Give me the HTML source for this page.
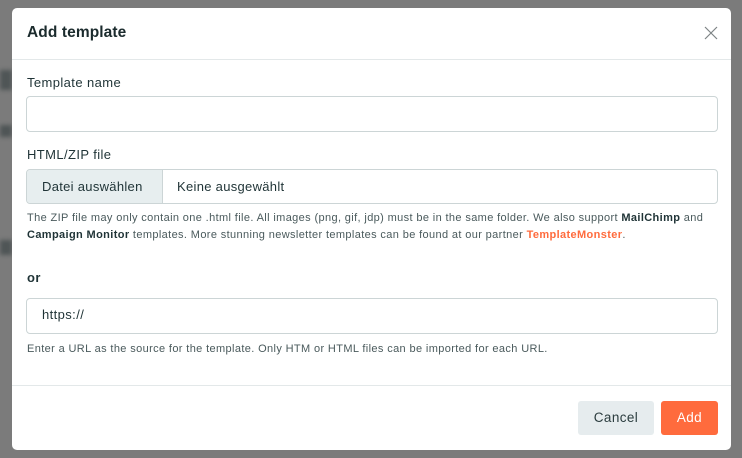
<!DOCTYPE html>
<html><head><meta charset="utf-8"><style>
*{box-sizing:border-box;margin:0;padding:0}
body{width:742px;height:458px;background:#7b7b7b;font-family:"Liberation Sans",sans-serif;position:relative;overflow:hidden;color:#1f3336}
.bl{position:absolute;left:0;width:12px;background:#4f5556;filter:blur(2px)}
.m{position:absolute;left:12px;top:8px;width:719px;height:442px;background:#fff;border-radius:5px}
.hd{height:52px;border-bottom:1px solid #e3e8e9;position:relative}
.hd h1{position:absolute;left:15px;top:16px;font-size:15.5px;font-weight:bold;color:#1b2b2d;letter-spacing:.1px}
.x{position:absolute;right:12px;top:17px}
.lbl{position:absolute;left:15px;font-size:13px;color:#1f3336;letter-spacing:.4px}
.in{position:absolute;left:14px;width:692px;height:36px;border:1px solid #ccd5d6;border-radius:4px}
.file{position:absolute;left:14px;top:161px;width:692px;height:35px;border:1px solid #ccd5d6;border-radius:4px;overflow:hidden;font-size:13px;letter-spacing:.3px}
.fb{position:absolute;left:0;top:0;bottom:0;width:136px;background:#e7eeef;border-right:1px solid #ccd5d6;padding:9px 0 0 15px;color:#1f3336}
.ft{position:absolute;left:150px;top:9px}
.hlp{position:absolute;left:15px;font-size:11px;letter-spacing:.37px;color:#4a5a5c;line-height:17px;width:710px;white-space:nowrap}
.hlp b{color:#1f3336}
.or{color:#ff6b3d;font-weight:bold}
.fd{position:absolute;left:0;right:0;top:377px;border-top:1px solid #e3e8e9}
.btn{position:absolute;top:393px;height:34px;border-radius:3px;font-size:13.5px;text-align:center;line-height:34px;letter-spacing:.4px}
</style></head><body>
<div class="bl" style="top:70px;height:20px"></div>
<div class="bl" style="top:125px;height:12px"></div>
<div class="bl" style="top:240px;height:15px"></div>
<div class="m">
<div class="hd"><h1>Add template</h1>
<svg class="x" width="16" height="16" viewBox="0 0 16 16"><path d="M2 2L14 14M14 2L2 14" stroke="#7d8485" stroke-width="1.2"/></svg></div>
<div class="lbl" style="top:67px">Template name</div>
<div class="in" style="top:88px"></div>
<div class="lbl" style="top:139px">HTML/ZIP file</div>
<div class="file"><div class="fb">Datei auswählen</div><div class="ft">Keine ausgewählt</div></div>
<div class="hlp" style="top:202px">The ZIP file may only contain one .html file. All images (png, gif, jdp) must be in the same folder. We also support <b>MailChimp</b> and<br><b>Campaign Monitor</b> templates. More stunning newsletter templates can be found at our partner <span class="or">TemplateMonster</span>.</div>
<div class="lbl" style="top:262px;font-weight:bold">or</div>
<div class="in" style="top:290px;font-size:13px;padding:8px 0 0 15px;letter-spacing:.4px">https://</div>
<div class="hlp" style="top:333px">Enter a URL as the source for the template. Only HTM or HTML files can be imported for each URL.</div>
<div class="fd"></div>
<div class="btn" style="left:566px;width:76px;background:#e6ecee;color:#2b3c3e">Cancel</div>
<div class="btn" style="left:649px;width:57px;background:#ff6b3d;color:#fff">Add</div>
</div>
</body></html>
